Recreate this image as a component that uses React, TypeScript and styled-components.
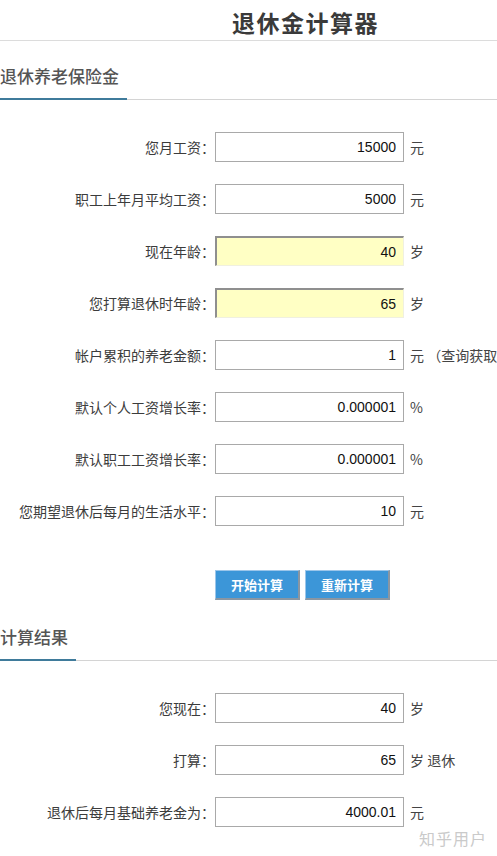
import React from "react"
import styled, { createGlobalStyle } from "styled-components"

const GlobalStyle = createGlobalStyle`
  html, body {
    margin: 0;
    padding: 0;
    background: #fff;
    overflow-x: hidden;
  }

  body {
    font-family: "Liberation Sans", "Noto Sans CJK SC", sans-serif;
    color: #333;
  }
`

const Page = styled.div`
  position: relative;
  width: 497px;
  min-height: 856px;
  overflow: hidden;
`

const Title = styled.h1`
  margin: 0;
  height: 40px;
  padding-left: 114px;

  border-bottom: 1px solid #dcdcdc;

  font-family: "Noto Sans CJK SC", sans-serif;
  font-size: 23px;
  font-weight: 700;
  line-height: 44px;
  letter-spacing: 1.5px;
  text-align: center;
  color: #3a3a3a;
`

const SectionHeader = styled.div<{ $top: number }>`
  display: flex;
  margin-top: ${({ $top }) => $top}px;
  border-bottom: 1px solid #d4d4d4;
`

const SectionName = styled.h2`
  margin: 0 0 -1px;
  padding: 0 8px 8px 0;

  border-bottom: 2px solid #3f7b9b;

  font-family: "Noto Sans CJK SC", sans-serif;
  font-size: 17px;
  font-weight: 500;
  line-height: 28px;
  color: #555;
`

const Form = styled.div`
  display: flex;
  flex-direction: column;
  gap: 22px;
  margin-top: 32px;
`

const Row = styled.div`
  display: grid;
  grid-template-columns: 215px 189px auto;
  align-items: center;
  height: 30px;
`

const Label = styled.label`
  font-family: "Noto Sans CJK SC", sans-serif;
  font-size: 14px;
  text-align: right;
  white-space: nowrap;
  color: #3c3c3c;
`

const Field = styled.input<{ $highlight?: boolean }>`
  box-sizing: border-box;
  width: 189px;
  height: 30px;
  padding: 0 7px 0 4px;

  border: 1px solid #a9a9a9;
  ${({ $highlight }) =>
    $highlight &&
    `
    border-top: 2px solid #8f8f8f;
    border-left: 2px solid #8f8f8f;
    border-right: 1px solid #f0f0e0;
    border-bottom: 1px solid #f0f0e0;
  `}
  background: ${({ $highlight }) => ($highlight ? "#ffffc4" : "#fff")};
  outline: none;

  font-family: "Liberation Sans", sans-serif;
  font-size: 14px;
  text-align: right;
  color: #111;
`

const Unit = styled.span`
  margin-left: 6px;

  font-family: "Noto Sans CJK SC", sans-serif;
  font-size: 14px;
  white-space: nowrap;
  color: #444;
`

const Actions = styled.div`
  display: flex;
  gap: 5px;
  margin: 44px 0 0 215px;
`

const Button = styled.button`
  box-sizing: border-box;
  width: 85px;
  height: 30px;
  padding: 0;

  border-top: 1px solid #9cc6ea;
  border-left: 1px solid #9cc6ea;
  border-right: 2px solid #8a96a2;
  border-bottom: 2px solid #8a96a2;
  background: #3c96d8;
  cursor: pointer;

  font-family: "Noto Sans CJK SC", sans-serif;
  font-size: 13px;
  font-weight: 700;
  color: #fff;
`

const Watermark = styled.div`
  position: absolute;
  right: 10px;
  bottom: 6px;

  font-family: "Noto Sans CJK SC", sans-serif;
  font-size: 16px;
  letter-spacing: 1px;
  color: #cacaca;
`

type Entry = {
  label: string
  value: string
  unit: string
  highlight?: boolean
}

const inputs: Entry[] = [
  { label: "您月工资：", value: "15000", unit: "元" },
  { label: "职工上年月平均工资：", value: "5000", unit: "元" },
  { label: "现在年龄：", value: "40", unit: "岁", highlight: true },
  { label: "您打算退休时年龄：", value: "65", unit: "岁", highlight: true },
  { label: "帐户累积的养老金额：", value: "1", unit: "元 （查询获取）" },
  { label: "默认个人工资增长率：", value: "0.000001", unit: "%" },
  { label: "默认职工工资增长率：", value: "0.000001", unit: "%" },
  { label: "您期望退休后每月的生活水平：", value: "10", unit: "元" },
]

const results: Entry[] = [
  { label: "您现在：", value: "40", unit: "岁" },
  { label: "打算：", value: "65", unit: "岁 退休" },
  { label: "退休后每月基础养老金为：", value: "4000.01", unit: "元" },
]

function FieldRow({ label, value, unit, highlight }: Entry) {
  return (
    <Row>
      <Label>{label}</Label>
      <Field $highlight={highlight} defaultValue={value} />
      <Unit>{unit}</Unit>
    </Row>
  )
}

export default function App() {
  return (
    <Page>
      <GlobalStyle />
      <Title>退休金计算器</Title>

      <SectionHeader $top={21}>
        <SectionName>退休养老保险金</SectionName>
      </SectionHeader>
      <Form>
        {inputs.map((entry) => (
          <FieldRow key={entry.label} {...entry} />
        ))}
      </Form>
      <Actions>
        <Button>开始计算</Button>
        <Button>重新计算</Button>
      </Actions>

      <SectionHeader $top={23}>
        <SectionName>计算结果</SectionName>
      </SectionHeader>
      <Form>
        {results.map((entry) => (
          <FieldRow key={entry.label} {...entry} />
        ))}
      </Form>

      <Watermark>知乎用户</Watermark>
    </Page>
  )
}
